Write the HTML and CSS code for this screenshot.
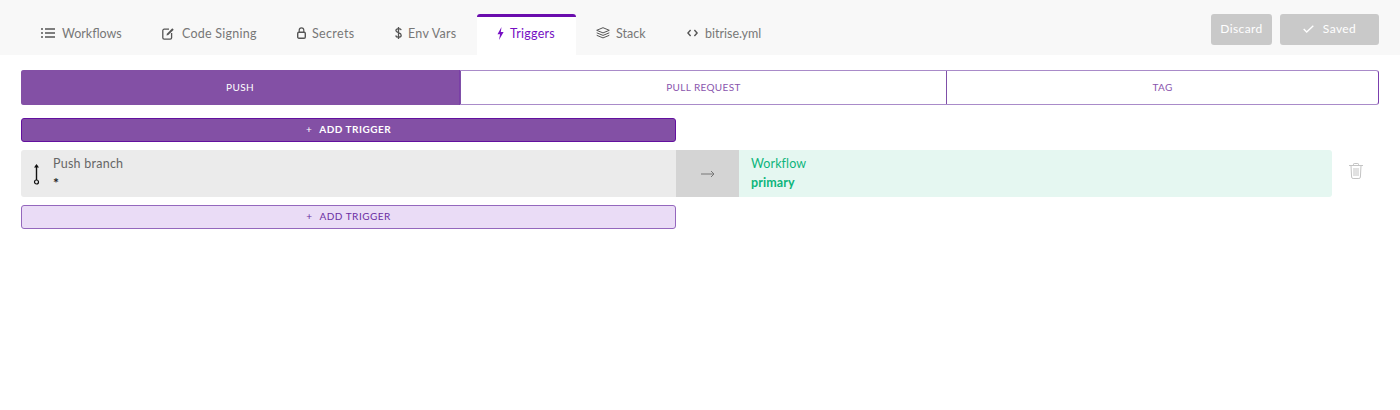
FILE: index.html
```html
<!DOCTYPE html>
<html lang="en">
<head>
<meta charset="utf-8">
<title>Triggers</title>
<link rel="stylesheet" href="styles.css">
</head>
<body>
<header class="topbar">
  <nav class="tabs">
    <a class="tab"><svg class="ico" width="15" height="12" viewBox="0 0 15 12"><g fill="none" stroke="currentColor" stroke-width="1.3"><path d="M4 2h10M4 6h10M4 10h10"/><path d="M0 2h2M0 6h2M0 10h2"/></g></svg>Workflows</a>
    <a class="tab"><svg class="ico" width="14" height="13" viewBox="0 0 14 13"><path d="M7 2.200H2.200a1.400 1.400 0 0 0-1.400 1.400v7.200a1.400 1.400 0 0 0 1.400 1.400h6a1.400 1.400 0 0 0 1.400-1.400V6" fill="none" stroke="currentColor" stroke-width="1.300"/><path d="M4.500 8.500l.4-1.800L10.300 1.300l1.400 1.400-5.400 5.400z" fill="currentColor"/></svg><span class="wide">Code Signing</span></a>
    <a class="tab"><svg class="ico" width="9" height="12" viewBox="0 0 9 12"><path d="M2.200 5V3.200a2.300 2.300 0 0 1 4.600 0V5" fill="none" stroke="currentColor" stroke-width="1.200"/><rect x=".7" y="5.200" width="7.600" height="6" rx="1.200" fill="none" stroke="currentColor" stroke-width="1.400"/></svg><span class="wider">Secrets</span></a>
    <a class="tab"><svg class="ico" width="7" height="12" viewBox="0 0 7 12"><path d="M6.200 3.200C6 2.200 5 1.700 3.500 1.700S.9 2.400.9 3.600c0 2.600 5.300 1.600 5.300 4.600 0 1.300-1.200 2-2.700 2S.9 9.500.7 8.500M3.500 0v12" fill="none" stroke="currentColor" stroke-width="1.300"/></svg><span class="wide">Env Vars</span></a>
    <a class="tab tab-active"><svg class="ico" width="7" height="13" viewBox="0 0 7 13"><path d="M4.500 0L.5 7.300h2.600L2 13l4.600-8H3.800z" fill="currentColor"/></svg><span class="wide">Triggers</span></a>
    <a class="tab"><svg class="ico" width="14" height="12" viewBox="0 0 14 12"><g fill="none" stroke="currentColor" stroke-width="1"><path d="M7 .7l6.300 2.600L7 5.900.7 3.300z"/><path d="M.7 5.800L7 8.400l6.300-2.600"/><path d="M.7 8.300L7 10.900l6.300-2.600"/></g></svg>Stack</a>
    <a class="tab"><svg class="ico" width="12" height="8" viewBox="0 0 12 8"><path d="M3.600 1L.9 4l2.700 3M7.400 1l2.700 3-2.700 3" fill="none" stroke="currentColor" stroke-width="1.400"/></svg>bitrise.yml</a>
  </nav>
  <div class="actions">
    <button class="btn btn-discard">Discard</button>
    <button class="btn btn-saved"><svg width="11" height="8" viewBox="0 0 11 8"><path d="M.7 4l3 3L10.300 .8" fill="none" stroke="currentColor" stroke-width="1.400"/></svg>Saved</button>
  </div>
</header>
<main class="content">
  <div class="segments">
    <div class="seg seg-on">PUSH</div>
    <div class="seg">PULL REQUEST</div>
    <div class="seg">TAG</div>
  </div>
  <div class="add add-solid"><span class="plus">+</span>ADD TRIGGER</div>
  <div class="row">
    <div class="cond">
      <svg class="push-ico" width="7" height="21" viewBox="0 0 7 21"><path d="M3.500 1.500V16" fill="none" stroke="#111" stroke-width="1.400"/><path d="M3.500 0L6 3.600H1z" fill="#111"/><circle cx="3.500" cy="18" r="2" fill="none" stroke="#111" stroke-width="1.200"/></svg>
      <div class="cond-text">
        <div class="cond-label">Push branch</div>
        <div class="cond-value">*</div>
      </div>
    </div>
    <div class="arrow"><svg width="14" height="8" viewBox="0 0 14 8"><path d="M0 4h13M10 1l3 3-3 3" fill="none" stroke="#777" stroke-width="1"/></svg></div>
    <div class="target">
      <div class="target-label">Workflow</div>
      <div class="target-value">primary</div>
    </div>
    <div class="trash"><svg width="14" height="16" viewBox="0 0 14 16"><g fill="none" stroke="#c4c4c4" stroke-width="1"><path d="M0 2.500h14M4.500 2.500V1.200q0-.7.700-.7h3.600q.7 0 .7.700v1.300M2 2.500l.6 11.500q.1 1.500 1.500 1.500h5.800q1.400 0 1.500-1.500L12 2.500M5 5v8M7 5v8M9 5v8"/></g></svg></div>
  </div>
  <div class="add add-soft"><span class="plus">+</span>ADD TRIGGER</div>
</main>
</body>
</html>
```
FILE: styles.css
```css
* { box-sizing: border-box; }
html, body { margin: 0; padding: 0; }
body {
  background: #fff;
  font-family: Lato, "Noto Sans", sans-serif;
  color: #666;
}
.topbar {
  display: flex;
  justify-content: space-between;
  height: 55px;
  padding: 14px 21px 0;
  background: #f8f8f8;
}
.tabs {
  display: grid;
  grid-template-columns: 121px 135px 98px 102px 99px 91px 115px;
}
.tab {
  display: flex;
  align-items: center;
  gap: 6px;
  height: 41px;
  padding: 0 0 3px 20px;
  font-size: 12.5px;
  color: #777;
}
.wide { letter-spacing: .25px; }
.wider { letter-spacing: .35px; }
.ico { color: #555; flex: none; }
.tab-active {
  background: #fff;
  border-top: 3px solid #6a0dad;
  border-radius: 3px 3px 0 0;
  padding-bottom: 6px;
  color: #760fc3;
}
.tab-active .ico { color: #760fc3; }
.actions { display: flex; gap: 8px; }
.btn {
  display: flex;
  align-items: center;
  justify-content: center;
  gap: 9px;
  height: 31px;
  padding: 0 0 2px;
  border: 0;
  border-radius: 3px;
  background: #c9c9c9;
  color: #fff;
  font: inherit;
  font-size: 12px;
  letter-spacing: .4px;
}
.btn-discard { width: 61px; }
.btn-saved { width: 99px; }
.content { padding: 15px 21px; }
.segments {
  display: grid;
  grid-template-columns: 438px 486px 1fr;
  height: 35px;
  margin-bottom: 13px;
  border: 1px solid #a98bc9;
  border-right-color: #7b3fae;
  border-radius: 3px;
}
.seg {
  display: flex;
  align-items: center;
  justify-content: center;
  padding-bottom: 2px;
  font-size: 10px;
  letter-spacing: .35px;
  color: #8a55ad;
  border-left: 1px solid #7f4fa8;
}
.seg:first-child { border-left: 0; }
.seg-on {
  margin: -1px 0 -1px -1px;
  border-radius: 3px 0 0 3px;
  background: #8350a5;
  color: #fff;
  border-right: 1px solid #7a3fa6;
}
.add {
  display: flex;
  align-items: center;
  justify-content: center;
  width: 655px;
  height: 24px;
  padding-bottom: 2px;
  border-radius: 3px;
  font-size: 10px;
  font-weight: 700;
  letter-spacing: .5px;
}
.plus { margin-right: 7px; font-weight: 400; }
.add-solid {
  background: #8350a5;
  border: 1px solid #63109f;
  color: #fff;
  margin-bottom: 8px;
}
.add-soft {
  background: #eadcf6;
  border: 1px solid #9467bd;
  color: #6b2ea3;
  font-weight: 400;
  margin-top: 8px;
}
.row { display: flex; height: 47px; }
.cond {
  display: flex;
  align-items: center;
  width: 655px;
  padding-left: 12px;
  gap: 13px;
  background: #ebebeb;
  border-radius: 3px 0 0 3px;
}
.push-ico { margin-top: 1px; flex: none; }
.cond-text, .target {
  display: flex;
  flex-direction: column;
  gap: 4px;
}
.cond-text { padding-bottom: 2px; }
.cond-label { font-size: 12.5px; line-height: 15px; letter-spacing: .25px; color: #666; }
.cond-value { font-size: 14px; line-height: 15px; font-weight: 700; color: #222; }
.arrow {
  display: flex;
  align-items: center;
  justify-content: center;
  width: 63px;
  background: #d4d4d4;
}
.target {
  justify-content: center;
  width: 593px;
  padding: 0 0 2px 12px;
  background: #e5f7f1;
  border-radius: 0 3px 3px 0;
}
.target-label { font-size: 12.5px; line-height: 15px; letter-spacing: .1px; color: #0db57c; }
.target-value { font-size: 12.5px; line-height: 15px; letter-spacing: .1px; font-weight: 700; color: #0db57c; }
.trash {
  display: flex;
  align-items: center;
  justify-content: center;
  width: 47px;
  padding-bottom: 6px;
}
```
